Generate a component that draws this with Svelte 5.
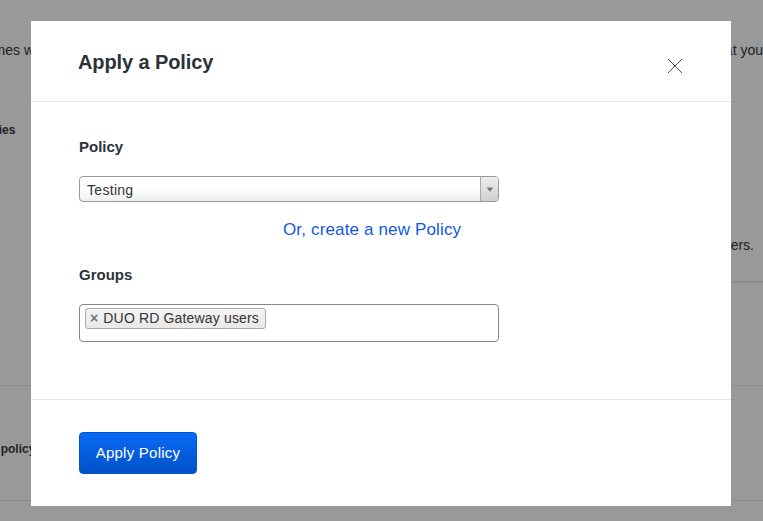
<script>
    let groups = ["DUO RD Gateway users"];
</script>

<div class="page">
    <div class="row row-intro">
        <span>Sometimes w</span>
        <span>what you</span>
    </div>
    <div class="row row-label"><b>Policies</b></div>
    <div class="row row-users"><span></span><span>users.</span></div>
    <div class="row row-empty"></div>
    <div class="row row-policy"><b>Apply policy</b></div>
    <div class="row row-end"></div>
</div>

<div class="overlay">
    <div class="modal">
        <header class="modal-header">
            <h1 class="title">Apply a Policy</h1>
            <button class="close" aria-label="Close">
                <svg width="16" height="16" viewBox="0 0 16 16">
                    <path d="M1 1L15 15M15 1L1 15" stroke="#4a4f54" stroke-width="1" fill="none" />
                </svg>
            </button>
        </header>

        <div class="modal-body">
            <div class="label">Policy</div>
            <div class="select">
                <span class="select-value">Testing</span>
                <span class="select-arrow"><i></i></span>
            </div>
            <div class="create-row"><a class="create" href="#new">Or, create a new Policy</a></div>

            <div class="label">Groups</div>
            <div class="chosen">
                {#each groups as group}
                    <span class="chip"><span class="chip-x">×</span>{group}</span>
                {/each}
            </div>
        </div>

        <footer class="modal-footer">
            <button class="apply">Apply Policy</button>
        </footer>
    </div>
</div>

<style>
    :global(body) {
        background: #999999;
        font-family: "Liberation Sans", Arial, sans-serif;
        overflow: hidden;
    }

    .page {
        height: 521px;
        overflow: hidden;
        color: #222222;
        font-size: 14px;
    }

    .row {
        display: flex;
        justify-content: space-between;
    }

    .row b {
        font-size: 12px;
    }

    .row-intro {
        height: 121px;
        padding-top: 42px;
        box-sizing: border-box;
        margin: 0 0 0 -50px;
    }

    .row-intro span:last-child {
        white-space: nowrap;
    }

    .row-label {
        height: 95px;
        padding-top: 2px;
        box-sizing: border-box;
        margin-left: -30px;
    }

    .row-users {
        height: 67px;
        padding: 21px 9px 0 0;
        margin-left: 40px;
        box-sizing: border-box;
        border-bottom: 2px solid #8c8c8c;
    }

    .row-empty {
        height: 102px;
        border-bottom: 1px solid #8c8c8c;
    }

    .row-policy {
        height: 115px;
        padding-top: 56px;
        box-sizing: border-box;
        margin-left: -36px;
        border-bottom: 1px solid #8c8c8c;
    }

    .overlay {
        position: fixed;
        inset: 0;
    }

    .modal {
        position: absolute;
        left: 31px;
        top: 21px;
        width: 700px;
        height: 485px;
        background: #ffffff;
        display: flex;
        flex-direction: column;
        color: #2c3238;
    }

    .modal-header {
        height: 81px;
        box-sizing: border-box;
        border-bottom: 1px solid #e3e8ee;
        padding: 0 48px;
        display: flex;
        justify-content: space-between;
        align-items: flex-start;
    }

    .title {
        margin: 27px 0 0 -1px;
        font-size: 20px;
        line-height: 28px;
        font-weight: 700;
        letter-spacing: -0.1px;
    }

    .close {
        margin: 37px 0 0;
        padding: 0;
        width: 16px;
        height: 16px;
        border: 0;
        background: none;
        line-height: 0;
    }

    .modal-body {
        flex: 1;
        padding: 36px 48px 0;
    }

    .label {
        font-size: 15px;
        line-height: 18px;
        font-weight: 700;
    }

    .select {
        margin-top: 20px;
        width: 420px;
        height: 26px;
        box-sizing: border-box;
        border: 1px solid #999999;
        border-radius: 4px;
        background: linear-gradient(#ffffff 50%, #eeeeee);
        display: flex;
        justify-content: space-between;
        font-size: 14px;
        letter-spacing: 0.3px;
        line-height: 26px;
        color: #333333;
    }

    .select-value {
        padding-left: 7px;
    }

    .select-arrow {
        width: 17px;
        background: linear-gradient(#eeeeee, #cfcfcf);
        border-left: 1px solid #aaaaaa;
        border-radius: 0 3px 3px 0;
        display: flex;
        align-items: center;
        justify-content: center;
    }

    .select-arrow i {
        border: 4px solid transparent;
        border-top: 5px solid #777777;
        border-bottom: 0;
        transform: scale(0.85);
    }

    .create-row {
        width: 420px;
        margin-top: 17px;
        margin-bottom: 25px;
        padding-left: 204px;
        box-sizing: border-box;
        white-space: nowrap;
    }

    .create {
        font-size: 17px;
        letter-spacing: 0.15px;
        line-height: 22px;
        color: #1259e0;
        text-decoration: none;
    }

    .chosen {
        margin-top: 20px;
        width: 420px;
        height: 38px;
        box-sizing: border-box;
        border: 1px solid #888888;
        border-radius: 4px;
        padding: 3px 5px;
    }

    .chip {
        display: inline-flex;
        align-items: center;
        height: 21px;
        box-sizing: border-box;
        padding: 0 6px 1px 4px;
        border: 1px solid #aaaaaa;
        border-radius: 3px;
        background: linear-gradient(#f4f4f4, #e8e8e8);
        font-size: 14px;
        letter-spacing: 0.16px;
        color: #333333;
    }

    .chip-x {
        color: #777777;
        font-weight: 700;
        margin-right: 5px;
    }

    .modal-footer {
        height: 107px;
        box-sizing: border-box;
        border-top: 1px solid #e3e8ee;
        padding: 32px 48px 0;
    }

    .apply {
        width: 118px;
        height: 42px;
        padding: 0 0 1px;
        border: 1px solid #0055cc;
        border-radius: 4px;
        background: linear-gradient(#0a69f5, #0052c8);
        color: #ffffff;
        font-family: inherit;
        font-size: 15px;
        letter-spacing: 0.25px;
    }
</style>
